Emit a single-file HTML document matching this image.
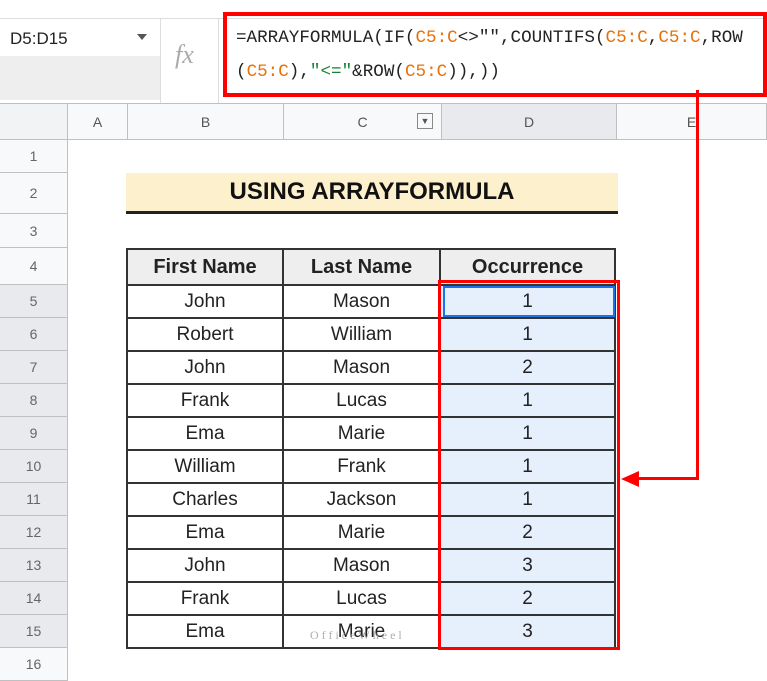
<!DOCTYPE html><html><head><style>
body{margin:0;width:767px;height:680px;overflow:hidden;background:#fff;font-family:"Liberation Sans",Arial,sans-serif;position:relative}
.a{position:absolute}
.rh{position:absolute;left:0;width:68px;background:#f8f9fa;border-bottom:1px solid #c0c0c0;border-right:1px solid #c0c0c0;box-sizing:border-box;text-align:center;color:#666;font-size:14px}
.ch{position:absolute;top:104px;height:36px;line-height:36px;background:#f8f9fa;border-right:1px solid #c0c0c0;border-bottom:1px solid #c0c0c0;box-sizing:border-box;text-align:center;color:#555;font-size:14px}
table{position:absolute;left:126px;top:248px;border-collapse:collapse;font-size:19px;color:#222}
td{border:2px solid #333;text-align:center;height:31px;padding:0}
.o{color:#e8710a}.g{color:#188038}
</style></head><body>
<div class="a" style="left:0;top:0;width:767px;height:18px;border-bottom:1px solid #ddd"></div>
<div class="a" style="left:0;top:22px;width:160px;height:34px;line-height:34px;font-size:17px;padding-left:10px;color:#222">D5:D15</div>
<div class="a" style="left:137px;top:34px;width:0;height:0;border:5px solid transparent;border-top:6px solid #555"></div>
<div class="a" style="left:0;top:56px;width:160px;height:44px;background:#eee"></div>
<div class="a" style="left:160px;top:18px;width:1px;height:85px;background:#ddd"></div>
<div class="a" style="left:218px;top:18px;width:1px;height:85px;background:#ddd"></div>
<div class="a" style="left:175px;top:40px;font-family:'Liberation Serif',serif;font-style:italic;font-size:26px;color:#aaa">fx</div>
<div class="a" style="left:0;top:103px;width:767px;height:1px;background:#c0c0c0"></div>
<div class="a" style="left:223px;top:12px;width:536px;height:77px;border:4px solid #f00;box-sizing:content-box"></div>
<div class="a" style="left:236px;top:21px;font-family:'Liberation Mono',monospace;font-size:17.6px;line-height:34px;color:#222;white-space:pre">=ARRAYFORMULA(IF(<span class="o">C5:C</span>&lt;&gt;"",COUNTIFS(<span class="o">C5:C</span>,<span class="o">C5:C</span>,ROW
(<span class="o">C5:C</span>),<span class="g">"&lt;="</span>&amp;ROW(<span class="o">C5:C</span>)),))</div>
<div class="rh" style="top:104px;height:36px;background:#f1f3f4"></div>
<div class="ch" style="left:68px;width:60px">A</div>
<div class="ch" style="left:128px;width:156px">B</div>
<div class="ch" style="left:284px;width:158px">C<span style="position:absolute;right:8px;top:9px;width:16px;height:16px;border:1px solid #888;box-sizing:border-box;font-size:9px;line-height:14px">▼</span></div>
<div class="ch" style="left:442px;width:175px;background:#e8eaed">D</div>
<div class="ch" style="left:617px;width:150px">E</div>
<div class="rh" style="top:140px;height:33px;line-height:33px">1</div>
<div class="rh" style="top:173px;height:41px;line-height:41px">2</div>
<div class="rh" style="top:214px;height:34px;line-height:34px">3</div>
<div class="rh" style="top:248px;height:37px;line-height:37px">4</div>
<div class="rh" style="top:285px;height:33px;line-height:33px;background:#e8eaed">5</div>
<div class="rh" style="top:318px;height:33px;line-height:33px;background:#e8eaed">6</div>
<div class="rh" style="top:351px;height:33px;line-height:33px;background:#e8eaed">7</div>
<div class="rh" style="top:384px;height:33px;line-height:33px;background:#e8eaed">8</div>
<div class="rh" style="top:417px;height:33px;line-height:33px;background:#e8eaed">9</div>
<div class="rh" style="top:450px;height:33px;line-height:33px;background:#e8eaed">10</div>
<div class="rh" style="top:483px;height:33px;line-height:33px;background:#e8eaed">11</div>
<div class="rh" style="top:516px;height:33px;line-height:33px;background:#e8eaed">12</div>
<div class="rh" style="top:549px;height:33px;line-height:33px;background:#e8eaed">13</div>
<div class="rh" style="top:582px;height:33px;line-height:33px;background:#e8eaed">14</div>
<div class="rh" style="top:615px;height:33px;line-height:33px;background:#e8eaed">15</div>
<div class="rh" style="top:648px;height:33px;line-height:33px">16</div>
<div class="a" style="left:126px;top:173px;width:492px;height:38px;background:#fdf0cc;border-bottom:3px solid #222;text-align:center;line-height:38px;font-weight:bold;font-size:24px;color:#111">USING ARRAYFORMULA</div>
<table>
<tr style="background:#eee;font-weight:bold;font-size:20px"><td style="width:154px;height:34px">First Name</td><td style="width:155px">Last Name</td><td style="width:173px">Occurrence</td></tr>
<tr><td>John</td><td>Mason</td><td style="background:#e6effc">1</td></tr>
<tr><td>Robert</td><td>William</td><td style="background:#e6effc">1</td></tr>
<tr><td>John</td><td>Mason</td><td style="background:#e6effc">2</td></tr>
<tr><td>Frank</td><td>Lucas</td><td style="background:#e6effc">1</td></tr>
<tr><td>Ema</td><td>Marie</td><td style="background:#e6effc">1</td></tr>
<tr><td>William</td><td>Frank</td><td style="background:#e6effc">1</td></tr>
<tr><td>Charles</td><td>Jackson</td><td style="background:#e6effc">1</td></tr>
<tr><td>Ema</td><td>Marie</td><td style="background:#e6effc">2</td></tr>
<tr><td>John</td><td>Mason</td><td style="background:#e6effc">3</td></tr>
<tr><td>Frank</td><td>Lucas</td><td style="background:#e6effc">2</td></tr>
<tr><td>Ema</td><td>Marie</td><td style="background:#e6effc">3</td></tr>
</table>
<div class="a" style="left:443px;top:286px;width:172px;height:31px;border:2px solid #1a73e8;box-sizing:border-box"></div>
<div class="a" style="left:438px;top:280px;width:176px;height:364px;border:3px solid #f00"></div>
<div class="a" style="left:696px;top:90px;width:3px;height:390px;background:#f00"></div>
<div class="a" style="left:636px;top:477px;width:63px;height:3px;background:#f00"></div>
<div class="a" style="left:621px;top:471px;width:0;height:0;border-top:8px solid transparent;border-bottom:8px solid transparent;border-right:18px solid #f00"></div>
<div class="a" style="left:310px;top:628px;font-size:12px;letter-spacing:3px;color:#999;font-family:'Liberation Serif',serif;opacity:.8">OfficeWheel</div>
</body></html>
